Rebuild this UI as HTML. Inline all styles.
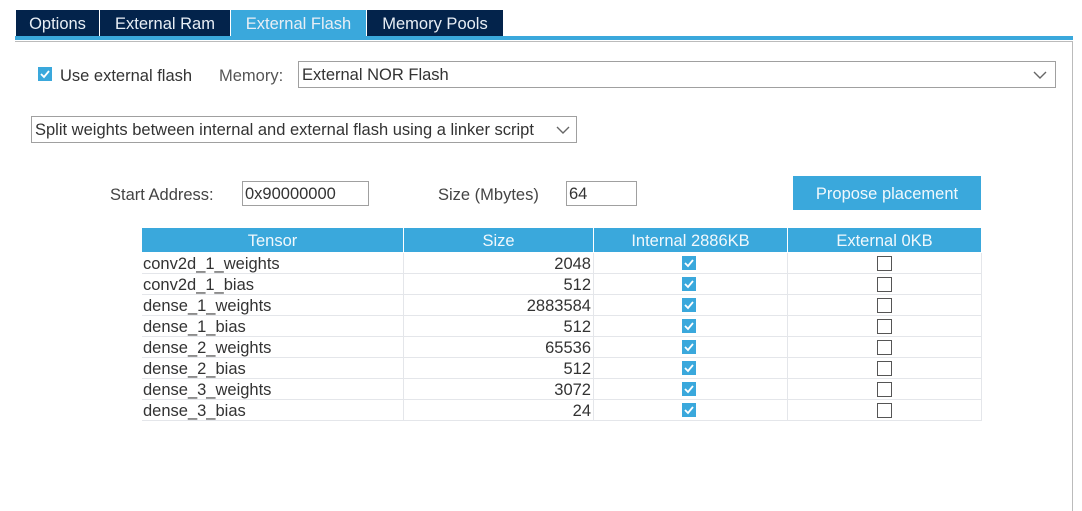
<!DOCTYPE html>
<html><head><style>
*{margin:0;padding:0;box-sizing:border-box}
body{width:1082px;height:500px;background:#fff;position:relative;font-family:"Liberation Sans",sans-serif;color:#333;font-size:16.5px;overflow:hidden}
.a{position:absolute}
.tab{position:absolute;top:10px;height:26px;background:#03234b;color:#e8eef5;font-size:16.5px;line-height:28px;text-align:center}
.box{position:absolute;border:1px solid #a0a0a0;background:#fff}
.hd{position:absolute;top:228px;height:24px;background:#3aa8dc;color:#f0f8fc;line-height:26px;text-align:center;font-size:16.5px}
.row{position:absolute;left:142px;width:840px;height:21px;border-bottom:1px solid #e4e6ea}
.c{position:absolute;top:0;height:20px;line-height:22px;font-size:16.5px}
.ck{position:absolute;width:14px;height:14px;background:#3aa8dc;top:3px}
.un{position:absolute;width:15px;height:15px;border:1px solid #555;background:#fff;top:3px}
</style></head><body>
<div class="tab" style="left:16px;width:83px">Options</div>
<div class="tab" style="left:100px;width:130px">External Ram</div>
<div class="tab" style="left:231px;width:135px;background:#3aa8dc">External Flash</div>
<div class="tab" style="left:367px;width:136px">Memory Pools</div>
<div class="a" style="left:15px;top:36px;width:1058px;height:4px;background:#3aa8dc"></div>
<div class="a" style="left:15px;top:41px;width:1058px;height:470px;border-top:1px solid #bbb;border-right:1px solid #bbb"></div>

<div class="a" style="left:38px;top:67px;width:14px;height:14px;background:#3aa8dc"><svg width="14" height="14"><path d="M3 7l3 3 5-6" stroke="#fff" stroke-width="1.8" fill="none"/></svg></div>
<div class="a" style="left:60px;top:66px;line-height:20px">Use external flash</div>
<div class="a" style="left:219px;top:66px;line-height:20px;color:#555">Memory:</div>
<div class="box" style="left:298px;top:61px;width:758px;height:27px;line-height:27px;padding-left:3px">External NOR Flash
<svg class="a" style="right:8px;top:9px" width="14" height="8"><path d="M1 1l6 6 6-6" stroke="#666" stroke-width="1.4" fill="none"/></svg></div>

<div class="box" style="left:31px;top:116px;width:546px;height:27px;line-height:27px;padding-left:3px">Split weights between internal and external flash using a linker script
<svg class="a" style="right:6px;top:9px" width="14" height="8"><path d="M1 1l6 6 6-6" stroke="#666" stroke-width="1.4" fill="none"/></svg></div>

<div class="a" style="left:110px;top:185px;line-height:20px;color:#444">Start Address:</div>
<div class="box" style="left:242px;top:181px;width:127px;height:25px;line-height:25px;padding-left:2px">0x90000000</div>
<div class="a" style="left:438px;top:185px;line-height:20px;color:#444">Size (Mbytes)</div>
<div class="box" style="left:566px;top:181px;width:71px;height:25px;line-height:25px;padding-left:2px">64</div>
<div class="a" style="left:793px;top:176px;width:188px;height:34px;background:#3aa8dc;color:#f0f8fc;line-height:36px;text-align:center">Propose placement</div>

<div class="hd" style="left:142px;width:261px">Tensor</div>
<div class="hd" style="left:404px;width:189px">Size</div>
<div class="hd" style="left:594px;width:193px">Internal 2886KB</div>
<div class="hd" style="left:788px;width:193px">External 0KB</div>

<div class="a" style="left:403px;top:253px;width:1px;height:167px;background:#e4e6ea"></div>
<div class="a" style="left:593px;top:253px;width:1px;height:167px;background:#e4e6ea"></div>
<div class="a" style="left:787px;top:253px;width:1px;height:167px;background:#e4e6ea"></div>
<div class="a" style="left:981px;top:253px;width:1px;height:167px;background:#e4e6ea"></div>

<div id="rows"></div>
<script>
var d=[["conv2d_1_weights",2048],["conv2d_1_bias",512],["dense_1_weights",2883584],["dense_1_bias",512],["dense_2_weights",65536],["dense_2_bias",512],["dense_3_weights",3072],["dense_3_bias",24]];
var h="";
d.forEach(function(r,i){
h+='<div class="row" style="top:'+(253+i*21)+'px"><div class="c" style="left:1px">'+r[0]+'</div><div class="c" style="left:262px;width:187px;text-align:right">'+r[1]+'</div><div class="ck" style="left:540px"><svg width="14" height="14"><path d="M3 7l3 3 5-6" stroke="#fff" stroke-width="1.8" fill="none"/></svg></div><div class="un" style="left:735px"></div></div>';
});
document.getElementById("rows").innerHTML=h;
</script>
</body></html>
